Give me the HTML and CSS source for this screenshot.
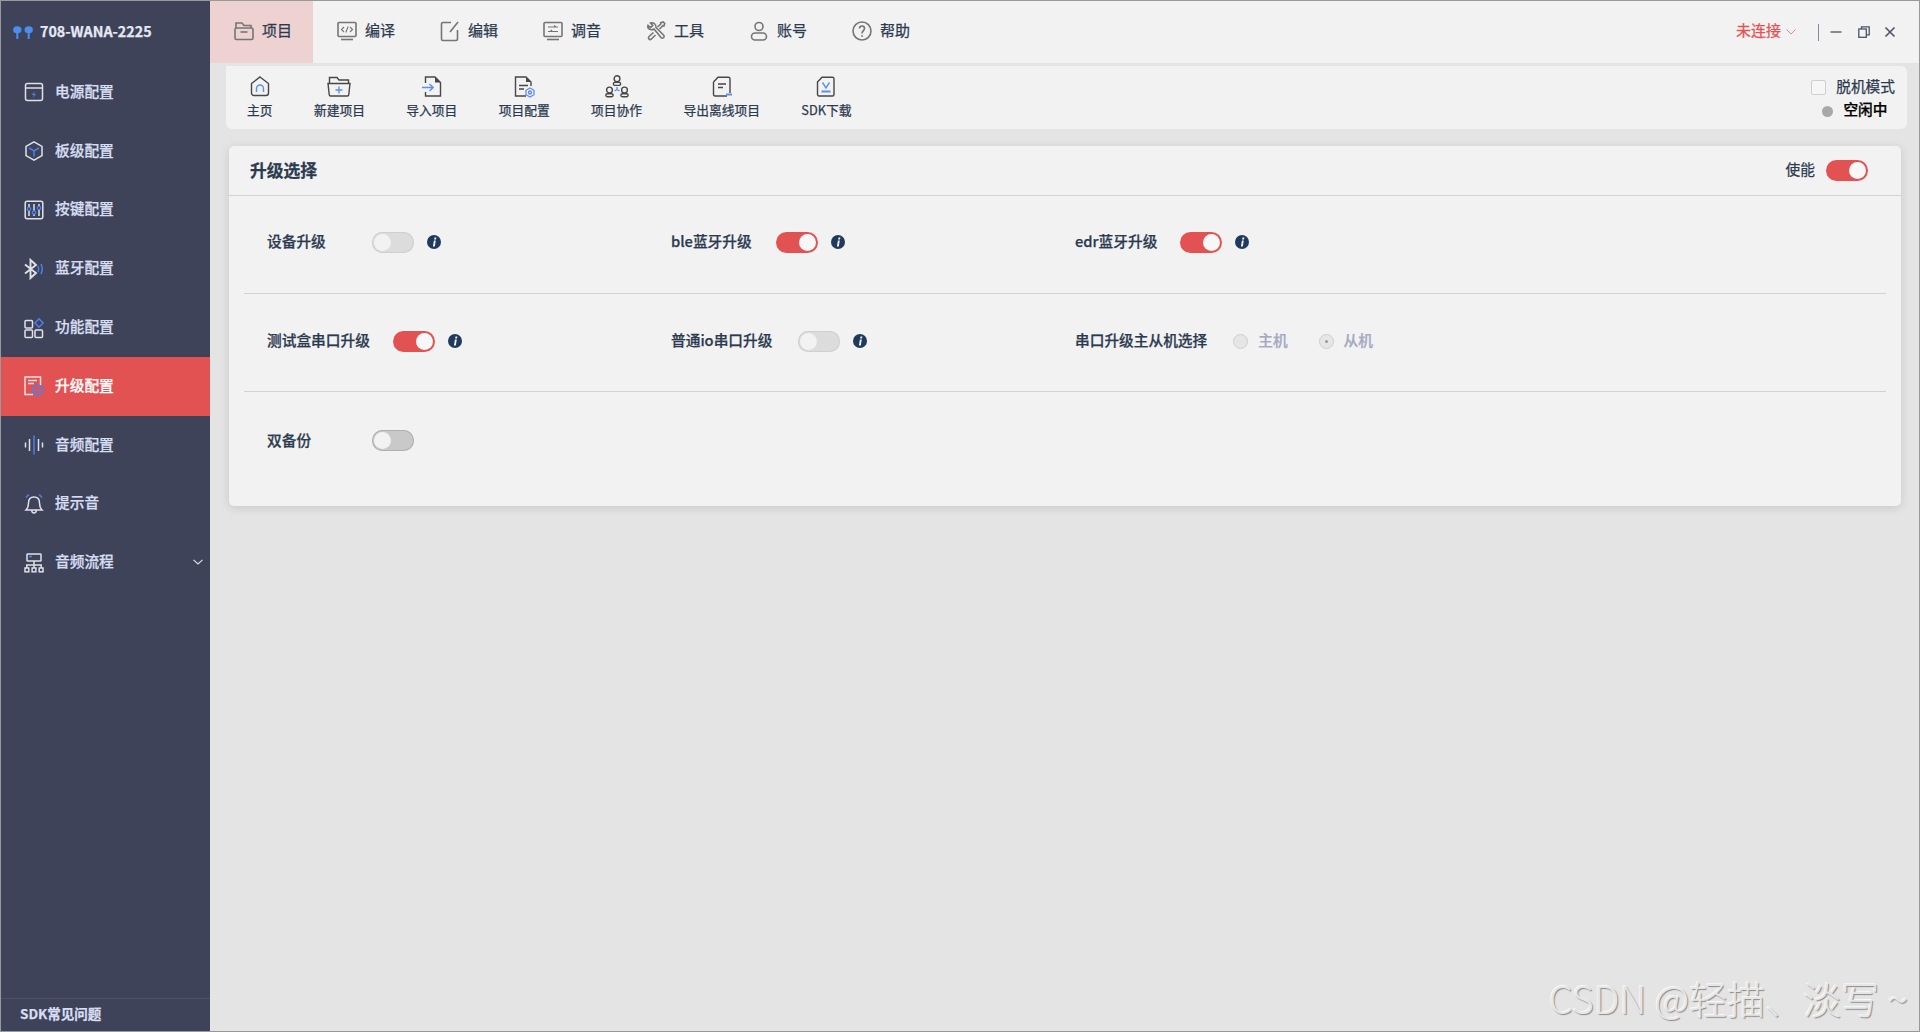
FILE: index.html
```html
<!DOCTYPE html>
<html lang="zh-CN">
<head>
<meta charset="utf-8">
<title>708-WANA-2225</title>
<link rel="stylesheet" href="styles.css">
</head>
<body>
<div class="window">
  <aside class="sidebar">
    <div class="brand">
      <svg class="brand-icon" viewBox="0 0 20 13"><g fill="#4d8df0"><ellipse cx="4.300" cy="3.800" rx="4.200" ry="3.500"/><rect x="3.300" y="5" width="2" height="8"/><ellipse cx="15.700" cy="3.800" rx="4.200" ry="3.500"/><rect x="14.700" y="5" width="2" height="8"/></g></svg>
      <span>708-WANA-2225</span>
    </div>
    <nav class="menu">
      <a class="menu-item"><svg class="side-icon" viewBox="0 0 20 20"><rect class="sl" x="1.500" y="1.500" width="17" height="17" rx="2"/><path class="sl" d="M1.500 6h17"/><path class="bf" d="M10.800 9 7.800 13h2l-.8 3 3-4h-2z"/></svg><span>电源配置</span></a>
      <a class="menu-item"><svg class="side-icon" viewBox="0 0 20 20"><path class="sl" d="M10 .8 18 5.400v9.200L10 19.200 2 14.600V5.400z"/><path class="bl" d="M5 7l5 3 5-3M10 10v5.500"/></svg><span>板级配置</span></a>
      <a class="menu-item"><svg class="side-icon" viewBox="0 0 20 20"><rect class="sl" x="1.200" y="1.200" width="17.600" height="17.600" rx="2"/><path class="sl" d="M5 4v12M10 4v12M15 4v12"/><circle class="bk" cx="5" cy="9" r="1.700"/><circle class="bk" cx="10" cy="12.500" r="1.700"/><circle class="bk" cx="15" cy="8" r="1.700"/></svg><span>按键配置</span></a>
      <a class="menu-item"><svg class="side-icon" viewBox="0 0 20 20"><path class="sl sl-thick" d="M1 5.500 12 14 6.500 19V1L12 6 1 14.500"/><path class="bl" d="M14 7c1 2 1 4 0 6M17 5c1.500 3 1.500 7 0 10"/></svg><span>蓝牙配置</span></a>
      <a class="menu-item"><svg class="side-icon" viewBox="0 0 20 20"><rect class="sl" x="1" y="2.500" width="7.500" height="7.500" rx="1"/><rect class="sl" x="1" y="12" width="7.500" height="7.500" rx="1"/><rect class="sl" x="11" y="12" width="7.500" height="7.500" rx="1"/><path class="bl" d="M15 .800 19 5l-4 4.200L11 5z"/></svg><span>功能配置</span></a>
      <a class="menu-item active"><svg class="side-icon" viewBox="0 0 20 20"><path class="sl sl-white" d="M9 18.500H1V1h15.500v8"/><path class="sl sl-white" d="M4 4.500h9M4 7.500h6"/><path class="bl" d="M13.500 9l5 1.800v4c0 2-2.500 3.500-5 4.700-2.500-1.200-5-2.700-5-4.700v-4z"/><path class="bl" d="M11.500 14.500l1.500 1.500 3-3"/></svg><span>升级配置</span></a>
      <a class="menu-item"><svg class="side-icon" viewBox="0 0 20 20"><path class="sl" d="M1.500 7.500v5M5.500 4v12M14.500 4v12M18.500 7.500v5"/><path class="bl" d="M10 .5v19"/></svg><span>音频配置</span></a>
      <a class="menu-item"><svg class="side-icon" viewBox="0 0 20 20"><path class="sl" d="M2 16c1.500-1.500 2.500-3.500 2.500-7 0-3.500 2-6 5.500-6s5.500 2.500 5.500 6c0 3.500 1 5.500 2.500 7zM7.800 16.500c0 3.200 4.400 3.200 4.400 0"/><path class="bl" d="M2 3.500 4.800.5M18 3.500 15.200.5"/></svg><span>提示音</span></a>
      <a class="menu-item"><svg class="side-icon" viewBox="0 0 20 20"><rect class="sl" x="3" y="1" width="14" height="7" rx=".6"/><path class="bl" d="M5 3.500h3"/><path class="sl" d="M10 8v4M2.800 15v-3h14.400v3M10 12v3"/><rect class="sl" x="1" y="15" width="3.800" height="3.800"/><rect class="sl" x="8.100" y="15" width="3.800" height="3.800"/><rect class="sl" x="15.200" y="15" width="3.800" height="3.800"/></svg><span>音频流程</span>
        <svg class="menu-chevron" viewBox="0 0 10 6"><path d="M.5.800 5 5l4.500-4.200"/></svg></a>
    </nav>
    <div class="side-footer"><span>SDK常见问题</span></div>
  </aside>

  <main class="main">
    <header class="topbar">
      <a class="tab active"><svg class="tab-icon" viewBox="0 0 20 20"><path class="tl" d="M2 7V2h6l2 2.500h7V7"/><rect class="tl" x="1" y="7" width="18" height="11.500" rx="1.500"/><path class="tl" d="M6.500 11h7"/></svg><span>项目</span></a>
      <a class="tab"><svg class="tab-icon" viewBox="0 0 20 20"><rect class="tl" x="1" y="1.500" width="18" height="14" rx="1"/><path class="tl" d="M4 18.500h12"/><path class="tl tl-thin" d="M7 6 4.500 8.500 7 11M13 6l2.500 2.500L13 11M11.200 5.500 8.800 11.500"/></svg><span>编译</span></a>
      <a class="tab"><svg class="tab-icon" viewBox="0 0 20 20"><path class="tl" d="M11 1.500H3a1.500 1.500 0 0 0-1.500 1.500v15A1.500 1.500 0 0 0 3 19.500h13a1.500 1.500 0 0 0 1.500-1.500V9"/><path class="tl" d="M18 1 10 11"/></svg><span>编辑</span></a>
      <a class="tab"><svg class="tab-icon" viewBox="0 0 20 20"><rect class="tl" x="1" y="1.500" width="18" height="14" rx="1"/><path class="tl" d="M4 18.500h12"/><path class="tl tl-thin" d="M5 6h10M5 10.500h10M11 4.500l1.800 1.500M9 9l-1.800 1.500"/></svg><span>调音</span></a>
      <a class="tab"><svg class="tab-icon" viewBox="0 0 20 20"><path class="tl" d="M8 8 15 16.500a1.700 1.700 0 0 0 2.700-2.200L10 6.500C10.500 3.500 7.500 1 4.500 2l2.300 2.500-2.300 2.200L2 4.500C1 7.500 4.500 10 8 8Z"/><path class="tl" d="M11.500 6 15 2.800l-.3-1 2.500-.8 1.500 1.500-.8 2.500-1-.3L13.500 8M7.500 11.500 3 15.500c-1.500 1.500.5 4 2.200 2.700L9.500 14"/></svg><span>工具</span></a>
      <a class="tab"><svg class="tab-icon" viewBox="0 0 20 20"><circle class="tl" cx="10" cy="5.500" r="4"/><rect class="tl" x="2.500" y="12" width="15" height="7" rx="3.500"/></svg><span>账号</span></a>
      <a class="tab"><svg class="tab-icon" viewBox="0 0 20 20"><circle class="tl" cx="10" cy="10" r="9"/><path class="tl" d="M7.500 7.500c0-3.300 5-3.300 5 0 0 2.200-2.500 2.200-2.500 5"/><circle class="tf" cx="10" cy="15" r=".9"/></svg><span>帮助</span></a>
      <div class="win-area">
        <span class="conn">未连接</span>
        <svg class="conn-chevron" viewBox="0 0 10 6"><path d="M.5.500 5 5 9.500.5"/></svg>
        <i class="win-sep"></i>
        <svg class="win-btn" viewBox="0 0 12 12"><path d="M.5 6h11"/></svg>
        <svg class="win-btn win-btn-near" viewBox="0 0 12 12"><rect x=".8" y="3" width="7.500" height="8.300"/><path d="M3.500 3V.8h7.700v8H8.300"/></svg>
        <svg class="win-btn" viewBox="0 0 12 12"><path class="win-x" d="M1.500 1.500l9 9M10.500 1.500l-9 9"/></svg>
      </div>
    </header>

    <section class="content">
      <div class="toolbar">
        <a class="tool"><svg class="tool-icon" viewBox="0 0 20 21"><path class="kl" d="M10 1 18.500 7.500V17a2.500 2.500 0 0 1-2.500 2.500H4A2.500 2.500 0 0 1 1.500 17V7.500z"/><path class="ul" d="M6.500 16v-3.500a3.500 3.500 0 0 1 7 0V16"/></svg><span>主页</span></a>
        <a class="tool"><svg class="tool-icon tool-wide" viewBox="0 0 24 21"><path class="kl" d="M2.500 8V1.500h7.500l2 2.500h9.500V8"/><path class="kl" d="M1 7.500h22l-1.200 11a1.500 1.500 0 0 1-1.500 1.500H3.700a1.500 1.500 0 0 1-1.500-1.500z"/><path class="ul" d="M12 10.500v7M8.500 14h7"/></svg><span>新建项目</span></a>
        <a class="tool"><svg class="tool-icon" viewBox="0 0 20 21"><path class="kl" d="M3.500 7V1h9.500l5.500 5.500V20H3.500v-4"/><path class="kf" d="M13 1l5.500 5.500H13z"/><path class="ul" d="M0 11.500h11M7.500 8l3.700 3.500L7.500 15"/></svg><span>导入项目</span></a>
        <a class="tool"><svg class="tool-icon" viewBox="0 0 20 21"><path class="kl" d="M12 20H1.500V1H12l5 5v4"/><path class="kf" d="M12 1l5 5h-5z"/><path class="kl" d="M5 9.500h9M5 13h5"/><path class="gear" d="M16 12l4 2.300v4.400L16 21l-4-2.300v-4.400z"/><circle class="ul" cx="16" cy="16.500" r="1.500"/></svg><span>项目配置</span></a>
        <a class="tool"><svg class="tool-icon tool-team" viewBox="0 0 24 23"><circle class="kl" cx="12" cy="3.700" r="2.900"/><rect class="kl" x="8.400" y="7.400" width="7.200" height="3" rx="1.400"/><circle class="kl" cx="4.500" cy="15" r="2.900"/><rect class="kl" x=".9" y="18.700" width="7.200" height="3" rx="1.400"/><circle class="kl" cx="19.500" cy="15" r="2.900"/><rect class="kl" x="15.900" y="18.700" width="7.200" height="3" rx="1.400"/><path class="ul" d="M12 12v2.500M12 14.500l-2.500 1.500M12 14.500l2.500 1.500"/></svg><span>项目协作</span></a>
        <a class="tool"><svg class="tool-icon" viewBox="0 0 20 21"><path class="kl" d="M1.500 6 6 1.200h10.500a1.500 1.500 0 0 1 1.500 1.500V17M15 20H3a1.500 1.500 0 0 1-1.500-1.500V6"/><path class="kl" d="M6 8h8M6 11.500h5"/><path class="ub" d="M14 18.500h6"/></svg><span>导出离线项目</span></a>
        <a class="tool"><svg class="tool-icon" viewBox="0 0 20 21"><path class="kl" d="M1.500 6 6 1.200h10.500a1.500 1.500 0 0 1 1.500 1.500v15.800a1.500 1.500 0 0 1-1.500 1.500H3a1.500 1.500 0 0 1-1.500-1.500z"/><path class="ul" d="M6.500 6.500 10 12l3.500-5.500"/><path class="ub" d="M5.500 15.500h9"/></svg><span>SDK下载</span></a>
        <div class="mode">
          <label class="mode-row"><i class="checkbox"></i><span>脱机模式</span></label>
          <div class="status-row"><i class="status-dot"></i><span>空闲中</span></div>
        </div>
      </div>

      <div class="card">
        <div class="card-head">
          <h2>升级选择</h2>
          <div class="card-switch"><span>使能</span><i class="toggle on"></i></div>
        </div>
        <div class="row row-first">
          <div class="field"><span class="label">设备升级</span><i class="toggle off"></i><svg class="info" viewBox="0 0 14 14"><circle cx="7" cy="7" r="7"/><path d="M7.500 2.600h1.900l-.4 1.800H7.100zM6.900 5.500h1.900L7.800 11.400H5.900z"/></svg></div>
          <div class="field"><span class="label">ble蓝牙升级</span><i class="toggle on"></i><svg class="info" viewBox="0 0 14 14"><circle cx="7" cy="7" r="7"/><path d="M7.500 2.600h1.900l-.4 1.800H7.100zM6.900 5.500h1.900L7.800 11.400H5.900z"/></svg></div>
          <div class="field"><span class="label">edr蓝牙升级</span><i class="toggle on"></i><svg class="info" viewBox="0 0 14 14"><circle cx="7" cy="7" r="7"/><path d="M7.500 2.600h1.900l-.4 1.800H7.100zM6.900 5.500h1.900L7.800 11.400H5.900z"/></svg></div>
        </div>
        <div class="row">
          <div class="field"><span class="label">测试盒串口升级</span><i class="toggle on"></i><svg class="info" viewBox="0 0 14 14"><circle cx="7" cy="7" r="7"/><path d="M7.500 2.600h1.900l-.4 1.800H7.100zM6.900 5.500h1.900L7.800 11.400H5.900z"/></svg></div>
          <div class="field"><span class="label label-wide">普通io串口升级</span><i class="toggle off"></i><svg class="info" viewBox="0 0 14 14"><circle cx="7" cy="7" r="7"/><path d="M7.500 2.600h1.900l-.4 1.800H7.100zM6.900 5.500h1.900L7.800 11.400H5.900z"/></svg></div>
          <div class="field"><span class="label label-wide">串口升级主从机选择</span>
            <span class="radio"><i class="radio-dot"></i><span>主机</span></span>
            <span class="radio"><i class="radio-dot checked"></i><span>从机</span></span>
          </div>
        </div>
        <div class="row row-last">
          <div class="field"><span class="label label-low">双备份</span><i class="toggle dim"></i></div>
        </div>
      </div>
    </section>
  </main>
</div>
<div class="watermark">CSDN @轻描、淡写 ~</div>
</body>
</html>
```
FILE: styles.css
```css
* { box-sizing: border-box; }
html, body { margin: 0; height: 100%; overflow: hidden; }
body {
  font-family: "Noto Sans CJK SC", "Liberation Sans", sans-serif;
  color: #2c3a50;
  background: #e4e4e4;
  -webkit-text-stroke: .25px currentColor;
}
a { text-decoration: none; color: inherit; }
i { font-style: normal; display: block; }
svg { display: block; flex: none; overflow: visible; }

/* Noto's line box sits lower than the original font's */
.menu-item > span,
.brand > span,
.side-footer > span,
.label,
.radio > span,
.card-switch > span,
.mode-row > span,
.status-row > span { padding-bottom: 4px; }
.tab > span,
.conn { padding-bottom: 6px; }

.window {
  display: flex;
  height: 1032px;
  border: 1px solid #999;
  background: #e4e4e4;
}

/* sidebar */
.sidebar {
  width: 209px;
  flex: none;
  display: flex;
  flex-direction: column;
  background: #3e4359;
  color: #d7def2;
}
.brand {
  height: 62px;
  flex: none;
  display: flex;
  align-items: center;
  gap: 7px;
  padding-left: 12px;
  font-size: 14.300px;
  font-weight: 700;
  color: #e6e9f5;
}
.brand-icon { width: 20px; height: 13px; }
.menu { flex: 1; }
.menu-item {
  position: relative;
  height: 58.800px;
  display: flex;
  align-items: center;
  gap: 11px;
  padding-left: 23px;
  font-size: 14.700px;
  font-weight: 500;
}
.menu-item.active { background: #e25252; color: #fff; }
.side-icon { width: 20px; height: 20px; }
.sl { fill: none; stroke: #dfe1e8; stroke-width: 1.500; }
.sl-thick { stroke-width: 1.900; }
.sl-white { stroke: #f4dede; }
.bl { fill: none; stroke: #4d80ea; stroke-width: 1.500; }
.bf { fill: #4d80ea; }
.bk { fill: #3e4359; stroke: #4d80ea; stroke-width: 1.300; }
.menu-chevron {
  position: absolute;
  right: 7px;
  top: 26px;
  width: 10px;
  height: 6px;
  fill: none;
  stroke: #dfe1e8;
  stroke-width: 1.100;
}
.side-footer {
  height: 33px;
  flex: none;
  display: flex;
  align-items: center;
  padding-left: 19px;
  border-top: 1px solid #4d5269;
  font-size: 13.500px;
  font-weight: 700;
}

/* top bar */
.main { flex: 1; min-width: 0; display: flex; flex-direction: column; }
.topbar {
  height: 62px;
  flex: none;
  display: flex;
  align-items: center;
  background: #f2f2f2;
}
.tab {
  width: 103px;
  height: 100%;
  display: flex;
  align-items: center;
  gap: 8px;
  padding-left: 24px;
  font-size: 15px;
}
.tab.active { background: #eed2d2; }
.tab-icon { width: 20px; height: 20px; margin-top: -2px; }
.tl { fill: none; stroke: #757575; stroke-width: 1.600; }
.tl-thin { stroke-width: 1.100; }
.tf { fill: #757575; }
.win-area {
  margin-left: auto;
  display: flex;
  align-items: center;
  padding-right: 23px;
}
.conn { font-size: 15px; color: #e25252; }
.conn-chevron {
  width: 10px;
  height: 6px;
  margin-left: 5px;
  fill: none;
  stroke: #e58a8a;
  stroke-width: 1;
}
.win-sep { width: 1px; height: 17px; margin: 0 11px 0 22px; background: #7f8aa0; }
.win-btn {
  width: 12px;
  height: 12px;
  margin-right: 16px;
  fill: none;
  stroke: #4a5468;
  stroke-width: 1.300;
}
.win-btn-near { margin-right: 14px; }
.win-btn:last-child { margin-right: 0; }
.win-x { stroke-width: 1.600; }

/* content */
.content { flex: 1; min-height: 0; display: flex; flex-direction: column; }
.toolbar {
  height: 63px;
  flex: none;
  margin: 3px 12px 0 16px;
  padding-left: 21px;
  padding-right: 12px;
  display: flex;
  gap: 41.400px;
  background: #f2f2f2;
  border-radius: 0 6px 6px 6px;
}
.tool {
  display: flex;
  flex-direction: column;
  align-items: center;
  padding-top: 10px;
  gap: 4px;
  font-size: 12.750px;
  line-height: 18px;
  white-space: nowrap;
}
.tool-icon { width: 20px; height: 21px; }
.tool-wide { width: 24px; }
.tool-team { width: 24px; height: 23px; margin-top: -1px; margin-bottom: -1px; }
.kl { fill: none; stroke: #474747; stroke-width: 1.400; }
.kf { fill: #474747; }
.ul { fill: none; stroke: #5d8ff2; stroke-width: 1.400; }
.ub { fill: none; stroke: #5d8ff2; stroke-width: 2; }
.gear { fill: #f2f2f2; stroke: #5d8ff2; stroke-width: 1.300; }
.mode {
  margin-left: auto;
  display: flex;
  flex-direction: column;
  align-items: flex-end;
  padding-top: 11px;
  gap: 3px;
}
.mode-row { display: flex; align-items: center; gap: 10px; height: 20px; font-size: 14.700px; }
.checkbox {
  width: 15px;
  height: 15px;
  border: 1px solid #cfcfcf;
  border-radius: 2px;
  background: #f6f6f6;
}
.status-row {
  display: flex;
  align-items: center;
  gap: 10px;
  height: 20px;
  padding-right: 7.500px;
  font-size: 14.700px;
  font-weight: 500;
  color: #000;
}
.status-dot { width: 11px; height: 11px; border-radius: 50%; background: #a8a8a8; margin-top: 3px; }

.card {
  margin: 17px 18px 0 19px;
  background: #f2f2f2;
  border-radius: 5px;
  box-shadow: 0 2px 10px rgba(0, 0, 0, .12);
}
.card-head {
  height: 50px;
  display: flex;
  align-items: center;
  justify-content: space-between;
  padding: 0 33px 0 21px;
  border-bottom: 1px solid #d2d2d2;
}
.card-head h2 { margin: 0 0 2px; font-size: 16.800px; font-weight: 700; color: #2c3a50; }
.card-switch { display: flex; align-items: center; gap: 11px; font-size: 14.700px; }
.row {
  display: grid;
  grid-template-columns: repeat(3, 404px);
  margin: 0 15px;
  padding: 37px 0 39px 23px;
  border-bottom: 1px solid #d2d2d2;
}
.row-first { padding-top: 36px; padding-bottom: 40px; }
.row-last { padding-top: 38px; padding-bottom: 55px; border-bottom: 0; }
.field { display: flex; align-items: center; height: 21px; font-size: 14.700px; }
.label { min-width: 82px; margin-right: 23px; white-space: nowrap; font-weight: 500; }
.label-wide { margin-right: 26px; }
.label-low { padding-bottom: 2px; }
.toggle {
  position: relative;
  width: 42px;
  height: 21px;
  flex: none;
  border-radius: 11px;
}
.toggle::after {
  content: "";
  position: absolute;
  top: 2px;
  width: 17px;
  height: 17px;
  border-radius: 50%;
}
.toggle.on { background: #e25252; }
.toggle.on::after { right: 2px; background: #f7f7f7; }
.toggle.off { background: #dcdcdc; box-shadow: inset 0 0 0 1px #cfcfcf; }
.toggle.off::after { left: 2px; background: #f2f2f2; }
.toggle.dim { background: #c9c9c9; box-shadow: inset 0 0 0 1px #b0b0b0; }
.toggle.dim::after { left: 2px; background: #f2f2f2; }
.info { width: 14px; height: 14px; margin-left: 13px; fill: #1f3a5c; margin-top: -1px; }
.info path { fill: #f2f2f2; }
.radio { display: flex; align-items: center; gap: 10px; margin-right: 31px; color: #a4a8c2; font-weight: 500; }
.radio-dot {
  position: relative;
  width: 15px;
  height: 15px;
  border: 1px solid #cfcfcf;
  border-radius: 50%;
  background: #e6e6e6;
}
.radio-dot.checked::after {
  content: "";
  position: absolute;
  left: 5px;
  top: 5px;
  width: 3px;
  height: 3px;
  border-radius: 50%;
  background: #9a9a9a;
}

/* watermark laid over the page */
.watermark {
  position: absolute;
  right: 12px;
  bottom: 10px;
  font-size: 38px;
  font-weight: 300;
  line-height: 48px;
  white-space: nowrap;
  color: #e6e6e6;
  -webkit-text-stroke: 0;
  text-shadow: 1px 1px 1px #8a8a8a, -1px -1px 0 #f8f8f8;
}
```
